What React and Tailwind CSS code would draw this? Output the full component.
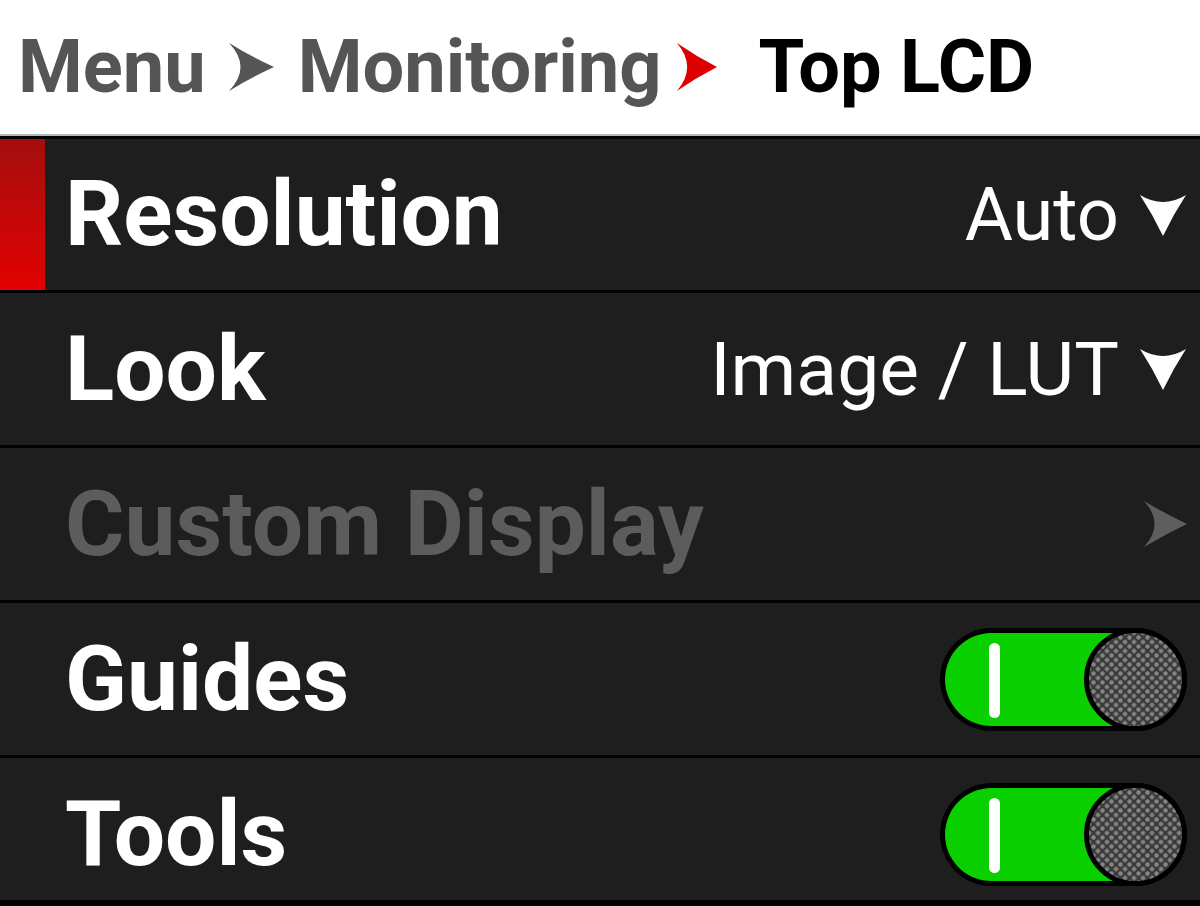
import React from "react";

const font = { fontFamily: "Roboto, 'Noto Sans', sans-serif" };

function Crumb({ color, w = 46 }) {
  return (
    <svg width={w} height="50" viewBox="0 0 46 50" className="shrink-0" preserveAspectRatio="none">
      <path d="M1 1 Q22 14 46 25 Q22 36 1 49 Q24 25 1 1 Z" fill={color} />
    </svg>
  );
}

function Chevron() {
  return (
    <svg width="48" height="44" viewBox="0 0 48 44" className="shrink-0">
      <path d="M1 2 Q24 16 47 2 Q34 22 24 43 Q14 22 1 2 Z" fill="#ffffff" />
    </svg>
  );
}

function Toggle() {
  return (
    <div className="relative w-[247px] h-[103px] rounded-full bg-black p-[5px]">
      <div className="h-full w-[190px] rounded-l-full bg-[#0bd000]" />
      <div className="absolute left-[49px] top-[15px] w-[11px] h-[75px] rounded-full bg-white" />
      <div className="absolute right-0 top-0 w-[103px] h-[103px] rounded-full border-[5px] border-black bg-[#3a3a3a] bg-[radial-gradient(circle,#858585_1.8px,transparent_2.6px),radial-gradient(circle,#858585_1.8px,transparent_2.6px)] [background-size:9px_9px] [background-position:0_0,4.5px_4.5px]" />
    </div>
  );
}

function Row({ children, className = "" }) {
  return (
    <div className={`relative flex items-center bg-[#1e1e1e] pl-[65px] pr-[13px] ${className}`}>
      {children}
    </div>
  );
}

export default function App() {
  return (
    <div className="w-[1200px] h-[906px] overflow-hidden bg-black" style={font}>
      <div className="h-[134px] bg-white flex items-center pl-[18px] text-[74px] font-bold leading-none">
        <span className="text-[#555555]">Menu</span>
        <span className="ml-[22px] mr-[24px] flex"><Crumb color="#555555" /></span>
        <span className="text-[#555555]">Monitoring</span>
        <span className="ml-[14px] mr-[42px] flex"><Crumb color="#dd0000" w={41} /></span>
        <span className="text-black">Top LCD</span>
      </div>
      <div className="h-[2px] bg-[#b8b8b8]" />
      <div className="flex flex-col gap-[3px] pt-[3px]">
        <Row className="h-[151px]">
          <div className="absolute left-0 top-0 bottom-0 w-[45px] bg-linear-to-b from-[#a50d0d] to-[#e20000]" />
          <span className="flex-1 text-white text-[91px] font-bold leading-none">Resolution</span>
          <span className="text-white text-[74px] leading-none">Auto</span>
          <span className="ml-[20px] flex"><Chevron /></span>
        </Row>
        <Row className="h-[152px]">
          <span className="flex-1 text-white text-[91px] font-bold leading-none">Look</span>
          <span className="text-white text-[75px] leading-none">Image / LUT</span>
          <span className="ml-[20px] flex"><Chevron /></span>
        </Row>
        <Row className="h-[152px]">
          <span className="flex-1 text-[#5c5c5c] text-[91px] font-bold leading-none">Custom Display</span>
          <span className="flex">
            <svg width="44" height="48" viewBox="0 0 44 48">
              <path d="M1 1 Q21 13 44 24 Q21 35 1 47 Q22 24 1 1 Z" fill="#5e5e5e" />
            </svg>
          </span>
        </Row>
        <Row className="h-[152px]">
          <span className="flex-1 text-white text-[91px] font-bold leading-none">Guides</span>
          <Toggle />
        </Row>
        <Row className="h-[142px] pt-[10px]">
          <span className="flex-1 text-white text-[91px] font-bold leading-none">Tools</span>
          <Toggle />
        </Row>
      </div>
    </div>
  );
}
